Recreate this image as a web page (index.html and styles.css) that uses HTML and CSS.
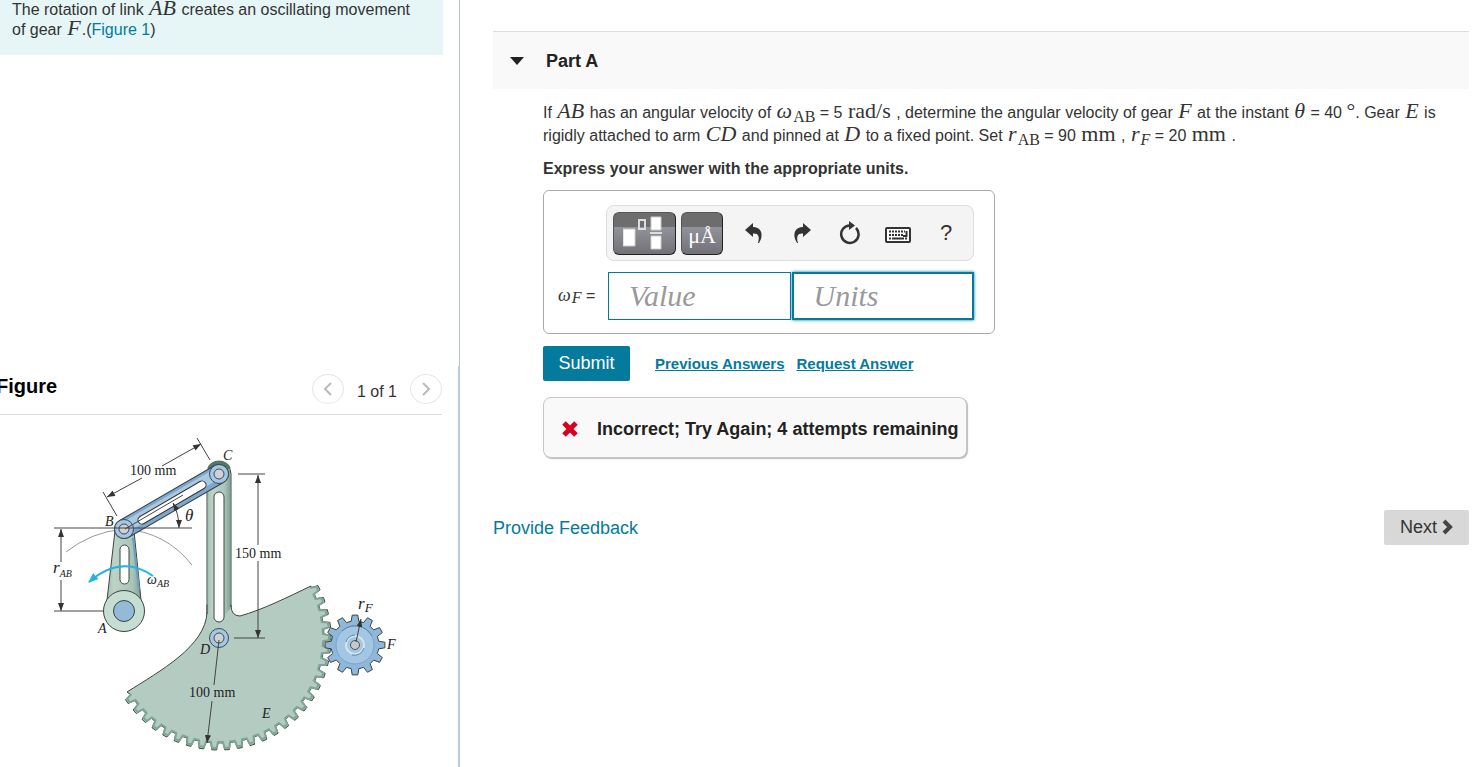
FILE: index.html
```html
<!DOCTYPE html>
<html lang="en">
<head>
    <meta charset="UTF-8">
    <title>Part A</title>
    <link rel="stylesheet" href="styles.css">
</head>
<body>
    <div id="container">
        <div id="side">
            <div class="intro-pane">
                <p class="intro">The rotation of link <i class="math">AB</i> creates an oscillating movement of gear <i class="math">F</i>.(<a href="#figure">Figure 1</a>)</p>
            </div>
            <div class="figure-pane" id="figure">
                <div class="figure-head">
                    <h2>Figure</h2>
                    <div class="pager">
                        <button type="button" aria-label="Previous figure"><svg width="10" height="16" viewBox="0 0 10 16"><path d="M8 2L2 8L8 14"/></svg></button>
                        <span>1 of 1</span>
                        <button type="button" aria-label="Next figure"><svg width="10" height="16" viewBox="0 0 10 16"><path d="M2 2L8 8L2 14"/></svg></button>
                    </div>
                </div>
                <svg class="drawing" viewBox="0 415 442 352" role="img" aria-label="Linkage driving gear F">
                    <defs>
                        <linearGradient id="green-arm" x1="0" x2="1" y1="0" y2="0">
                            <stop offset="0" stop-color="#a3c0b2"/>
                            <stop offset=".2" stop-color="#bdd3c8"/>
                            <stop offset=".75" stop-color="#a9c5b8"/>
                            <stop offset="1" stop-color="#7ba291"/>
                        </linearGradient>
                        <marker id="arrow" viewBox="0 0 8 6" refX="8" refY="3" markerWidth="8" markerHeight="6" markerUnits="userSpaceOnUse" orient="auto-start-reverse">
                            <path d="M0 0L8 3L0 6Z" fill="#333"/>
                        </marker>
                        <marker id="arrow-blue" viewBox="0 0 10 8" refX="9" refY="4" markerWidth="10" markerHeight="8" markerUnits="userSpaceOnUse" orient="auto">
                            <path d="M0 0L10 4L0 8Z" fill="#1eb4e6"/>
                        </marker>
                    </defs>

                    <!-- gear E with arm CD -->
                    <path id="gear-e" class="part" fill="#b3cbc1"/>
                    <path id="rim-e" class="rim"/>
                    <path d="M207.500 612V474A11.500 11.500 0 0 1 230.500 474V608L219 622Z" fill="url(#green-arm)"/>
                    <path class="edge" d="M207 614V474A12 12 0 0 1 231 474V607"/>
                    <path d="M209 469A11 11 0 0 1 229 469" fill="none" stroke="#537867" stroke-width="4"/>
                    <rect class="slot" x="214" y="492" width="10" height="130" rx="5"/>

                    <!-- path of B and link AB -->
                    <path class="thin faint" d="M66 552Q91 532 124 529Q166 532 192 565"/>
                    <path class="part" d="M115 531L107 600A20 20 0 0 0 141 600L134 531Z" fill="url(#green-arm)"/>
                    <path d="M133 538L139 589" stroke="#6e9dc1" stroke-width="2"/>
                    <circle class="part" cx="124" cy="611" r="20.500" fill="#c5ddd3"/>
                    <circle class="part" cx="124" cy="611" r="10.500" fill="#93bad7"/>
                    <rect class="slot" x="120" y="545" width="9" height="39" rx="4.500"/>

                    <!-- link BC -->
                    <path d="M124 529L219 474" stroke="#34424d" stroke-width="20" stroke-linecap="round"/>
                    <path d="M124 529L219 474" stroke="#7fa7ca" stroke-width="18" stroke-linecap="round"/>
                    <path d="M127 526L215 475" stroke="#a9c9e3" stroke-width="11" stroke-linecap="round"/>
                    <path d="M142 520L202 485" stroke="#333" stroke-width="9" stroke-linecap="round"/>
                    <path d="M142 520L202 485" stroke="#fff" stroke-width="7" stroke-linecap="round"/>
                    <g class="pin">
                        <circle cx="124" cy="529" r="9.500"/><circle cx="124" cy="529" r="5"/>
                        <circle cx="219" cy="474" r="9.500"/><circle cx="219" cy="474" r="5"/>
                        <circle cx="219" cy="638" r="9.500"/><circle cx="219" cy="638" r="5"/>
                    </g>

                    <!-- gear F -->
                    <path id="gear-f" class="part" fill="#8fb7d9"/>
                    <circle cx="355" cy="645" r="19" fill="#a3c6e2" stroke="#7ba5c8"/>
                    <circle cx="355" cy="645" r="9" fill="none" stroke="#d5e6f3" stroke-width="2"/>
                    <path d="M346 642A10 10 0 0 1 355 635M364 648A10 10 0 0 1 352 655M342 631A19 19 0 0 1 372 636" fill="none" stroke="#5887af"/>
                    <circle cx="355" cy="645" r="4.500" fill="#c6c8ca" stroke="#4d5459"/>

                    <!-- dimensions -->
                    <g class="thin">
                        <path d="M103 492L117 516M197 438L210 460"/>
                        <path d="M142 478L107 497" marker-end="url(#arrow)"/>
                        <path d="M162 466L201 444" marker-end="url(#arrow)"/>
                        <path d="M54 528H192M54 611H104"/>
                        <path d="M61 562V529" marker-end="url(#arrow)"/>
                        <path d="M61 580V611" marker-end="url(#arrow)"/>
                        <path d="M125 529L183 495"/>
                        <path d="M173 503Q179 514 179 528" marker-start="url(#arrow)" marker-end="url(#arrow)"/>
                        <path d="M238 474H265M234 638H265"/>
                        <path d="M258 545V475" marker-end="url(#arrow)"/>
                        <path d="M258 561V638" marker-end="url(#arrow)"/>
                        <path d="M219 640L214 685M212 701L207 743" marker-end="url(#arrow)"/>
                        <path d="M356 642L361 619" marker-end="url(#arrow)"/>
                    </g>
                    <path d="M153 576Q121 554 89 582" fill="none" stroke="#1eb4e6" stroke-width="2" marker-end="url(#arrow-blue)"/>

                    <g class="labels">
                        <text x="130" y="475">100 mm</text>
                        <text x="235" y="558">150 mm</text>
                        <text x="189" y="697">100 mm</text>
                        <g class="letter">
                            <text x="223" y="460">C</text>
                            <text x="105" y="526">B</text>
                            <text x="98" y="633">A</text>
                            <text x="200" y="654">D</text>
                            <text x="262" y="718">E</text>
                            <text x="387" y="649">F</text>
                            <text class="big" x="185" y="521">θ</text>
                            <text class="big" x="53" y="573">r<tspan class="small" dy="4">AB</tspan></text>
                            <text x="147" y="584">ω<tspan class="small" dy="3">AB</tspan></text>
                            <text class="big" x="358" y="609">r<tspan class="sub-f" dy="3">F</tspan></text>
                        </g>
                    </g>
                </svg>
            </div>
        </div>

        <div id="main">
            <div class="part-head">
                <button type="button" aria-label="Collapse Part A"><svg width="14" height="8" viewBox="0 0 14 8"><path d="M0 0H14L7 8Z" fill="#222"/></svg></button>
                <h1>Part A</h1>
            </div>
            <div class="part-body">
                <p class="prompt">If <i class="math">AB</i> has an angular velocity of <i class="math">ω</i><span class="math sub">AB</span> = 5 <span class="math unit">rad/s</span> , determine the angular velocity of gear <i class="math">F</i> at the instant <i class="math">θ</i> = 40 <span class="math">°</span>. Gear <i class="math">E</i> is rigidly attached to arm <i class="math">CD</i> and pinned at <i class="math">D</i> to a fixed point. Set <i class="math">r</i><span class="math sub">AB</span> = 90 <span class="math unit">mm</span> , <i class="math">r</i><i class="math sub">F</i> = 20 <span class="math unit">mm</span> .</p>
                <p class="express">Express your answer with the appropriate units.</p>
                <form id="answer">
                    <div class="answer-box">
                        <div class="toolbar">
                            <button type="button" class="dark wide" aria-label="Templates">
                                <svg width="44" height="36" viewBox="4 0 44 36">
                                    <path d="M4 14H16V31H4ZM32 2H42V15H32ZM32 21H42V34H32Z" fill="#fff" stroke="#ccc"/>
                                    <path d="M20 5H26V14H20Z" fill="none" stroke="#ddd" stroke-width="2"/>
                                    <path d="M31 18H43" stroke="#ddd" stroke-width="2"/>
                                </svg>
                            </button>
                            <button type="button" class="dark" aria-label="Symbols">μÅ</button>
                            <div class="tools">
                                <button type="button" aria-label="Undo"><svg width="18" height="20" viewBox="0 0 18 20"><path d="M0 7L8 0V4C15 4 18 9 16 16L14 20H13C15 13 13 10 8 10.500V14Z"/></svg></button>
                                <button type="button" aria-label="Redo"><svg width="18" height="20" viewBox="0 0 18 20"><path d="M18 7L10 0V4C3 4 0 9 2 16L4 20H5C3 13 5 10 10 10.500V14Z"/></svg></button>
                                <button type="button" aria-label="Reset"><svg width="22" height="24" viewBox="0 0 22 24"><path d="M11 4.500A8.700 8.700 0 1 0 17 7" fill="none" stroke="#333" stroke-width="2.500"/><path d="M10 0L16 4.500L10 9Z"/></svg></button>
                                <button type="button" aria-label="Keyboard"><svg class="keys" width="26" height="16" viewBox="0 0 26 16"><rect x="1" y="1" width="24" height="14" rx="1" fill="#fff" stroke="#333" stroke-width="2"/><path d="M4 4.500H20M4 8H18" stroke="#333" stroke-width="2" stroke-dasharray="2 1"/><path d="M4 11.500H6M7 11.500H19M20 11.500H22M21.500 4V9H18" fill="none" stroke="#333" stroke-width="2"/></svg></button>
                                <button type="button" class="help" aria-label="Help">?</button>
                            </div>
                        </div>
                        <label for="value"><i class="math">ω</i><i class="math sub">F</i> =</label>
                        <div class="fields">
                            <input type="text" id="value" placeholder="Value">
                            <input type="text" id="units" class="selected" placeholder="Units" aria-label="Units">
                        </div>
                    </div>
                    <div class="actions">
                        <button type="submit">Submit</button>
                        <a href="#previous">Previous Answers</a>
                        <a href="#request">Request Answer</a>
                    </div>
                </form>
                <div class="result">
                    <svg width="18" height="18" viewBox="0 0 18 18"><path d="M3 3L15 15M15 3L3 15" stroke="#d9001f" stroke-width="5"/></svg>
                    <span>Incorrect; Try Again; 4 attempts remaining</span>
                </div>
            </div>
            <div class="bottom">
                <a href="#feedback">Provide Feedback</a>
                <button type="button">Next <svg width="11" height="16" viewBox="0 0 11 16"><path d="M2 2L8 8L2 14" fill="none" stroke="#444" stroke-width="4"/></svg></button>
            </div>
        </div>
    </div>
    <script>
        // points of a toothed edge, angles in degrees
        function teeth(cx, cy, root, tip, from, step, count) {
            var steps = [[0.2, root], [0.32, tip], [0.68, tip], [0.8, root]];
            var out = [];
            for (var i = 0; i < count; i++) {
                for (var j = 0; j < steps.length; j++) {
                    var a = (from + (i + steps[j][0]) * step) * Math.PI / 180;
                    out.push((cx + steps[j][1] * Math.cos(a)).toFixed(1) + " " + (cy + steps[j][1] * Math.sin(a)).toFixed(1));
                }
            }
            return out.join("L");
        }
        var edge = teeth(219, 638, 105, 112, -30, 6.62, 27);
        document.getElementById("gear-e").setAttribute("d",
            "M207 612C206 646 160 671 127 692L" + edge.split("L").reverse().join("L") +
            "L311 586C288 597 262 610 240 616Q231 616 231 605L207 605Z");
        document.getElementById("rim-e").setAttribute("d", "M" + teeth(219, 638, 104, 110, -30, 6.62, 27));
        document.getElementById("gear-f").setAttribute("d", "M" + teeth(355, 645, 24, 30, -105, 30, 12) + "Z");
    </script>
</body>
</html>
```
FILE: styles.css
```css
*{
    margin: 0;
    padding: 0;
    box-sizing: border-box;
}
body{
    font: 16px/20px "Liberation Sans", Arial, sans-serif;
    color: #333;
    background: #fff;
    overflow: hidden;
}
a{
    color: #047a9c;
    text-decoration: none;
}
button{
    font: inherit;
    color: inherit;
    border: 0;
    background: none;
    cursor: pointer;
}
.math{
    font-family: "Liberation Serif", "Times New Roman", serif;
    font-size: 22px;
    line-height: 16px;
}
i.math{
    margin: 0 1px;
}
.math.unit{
    margin: 0 1px;
}
.math.sub{
    font-size: 16px;
    line-height: 0;
    vertical-align: -4px;
    margin: 0;
}
#container{
    display: grid;
    grid-template-columns: minmax(0, 460px) minmax(0, 1fr);
    min-height: 100vh;
}
#side{
    display: flex;
    flex-direction: column;
}
.intro-pane{
    height: 366px;
    padding-right: 16px;
    border-right: 1px solid #b9c4d6;
}
.intro{
    padding: 0 20px 15px 12px;
    background: #e6f6f7;
}
.figure-pane{
    flex: 1;
    padding-right: 16px;
    border-right: 2px solid #b7cade;
}
.figure-head{
    display: flex;
    justify-content: space-between;
    height: 49px;
    padding-top: 8px;
    border-bottom: 1px solid #ddd;
}
.figure-head h2{
    font-size: 20px;
    line-height: 24px;
    color: #000;
    margin-left: -4px;
}
.pager{
    display: flex;
    gap: 13px;
}
.pager span{
    line-height: 35px;
}
.pager button{
    width: 32px;
    height: 30px;
    border: 1px solid #e5e5e5;
    border-radius: 50%;
}
.pager svg{
    display: block;
    margin: auto;
    fill: none;
    stroke: #bbb;
    stroke-width: 2;
}
.drawing{
    display: block;
    width: 100%;
}
.part{
    stroke: #3b4642;
    stroke-width: 1;
}
.edge{
    fill: none;
    stroke: #3b4642;
}
.rim{
    fill: none;
    stroke: #7ea595;
    stroke-width: 2;
}
.slot{
    fill: #fff;
    stroke: #3b4642;
}
.pin circle{
    fill: #a6c7e1;
    stroke: #3b4a58;
}
.pin circle:nth-child(even){
    fill: #cfd2d4;
}
.thin{
    fill: none;
    stroke: #444;
    stroke-width: 1;
}
.faint{
    stroke: #999;
}
.labels{
    font: 14px "Liberation Serif", "Times New Roman", serif;
    fill: #222;
}
.letter{
    font-style: italic;
}
.big{
    font-size: 17px;
}
.small{
    font-size: 10px;
}
.sub-f{
    font-size: 13px;
}
#main{
    padding: 31px 8px 0 33px;
}
.part-head{
    display: flex;
    align-items: center;
    height: 58px;
    padding-left: 17px;
    border-top: 1px solid #ddd;
    background: #f9f9f9;
}
.part-head button{
    width: 14px;
    height: 20px;
    margin-right: 22px;
}
.part-head svg{
    display: block;
}
.part-head h1{
    font-size: 18px;
    color: #222;
}
.part-body{
    padding: 12px 0 0 50px;
}
.prompt{
    line-height: 23px;
    padding-right: 20px;
}
.express{
    font-weight: bold;
    margin: 12px 0 11px;
}
.answer-box{
    display: grid;
    grid-template-columns: 49px 368px;
    align-items: center;
    gap: 11px 0;
    width: max-content;
    padding: 14px 20px 13px 13px;
    border: 1px solid #aaa;
    border-radius: 6px;
}
.toolbar{
    grid-column: 2;
    display: flex;
    align-items: center;
    gap: 5px;
    height: 56px;
    padding: 0 6px;
    border: 1px solid #ddd;
    border-radius: 8px;
    background: #f4f4f4;
}
.dark{
    width: 42px;
    height: 43px;
    padding-top: 6px;
    border: 1px solid #555;
    border-right-color: #222;
    border-bottom-color: #222;
    border-radius: 6px;
    background: linear-gradient(#6d6d6d 34%, #92929a 35%, #717176);
    color: #fff;
    font: 22px "Liberation Serif", "Times New Roman", serif;
}
.dark.wide{
    width: 63px;
    padding-top: 0;
}
.dark svg{
    display: block;
    margin: auto;
}
.tools{
    flex: 1;
    display: flex;
    justify-content: space-between;
    padding: 0 4px 0 9px;
}
.tools button{
    display: flex;
    align-items: center;
    justify-content: center;
    width: 34px;
    height: 32px;
    fill: #333;
}
.tools .keys{
    margin-top: 4px;
}
.tools .help{
    font-size: 22px;
}
.fields{
    display: grid;
    grid-template-columns: 1fr 1fr;
    gap: 1px;
    padding-left: 2px;
}
.fields input{
    width: 100%;
    height: 48px;
    padding: 0 20px;
    border: 1px solid #047a9c;
    font: italic 30px "Liberation Serif", "Times New Roman", serif;
}
.fields .selected{
    border-width: 2px;
    box-shadow: 0 0 3px #047a9c;
}
.fields input::placeholder{
    color: #999;
}
label .math{
    font-size: 18px;
}
label .math.sub{
    vertical-align: -2px;
}
.actions{
    display: flex;
    align-items: center;
    gap: 12px;
    margin: 12px 0 16px;
}
.actions button{
    width: 87px;
    height: 35px;
    padding-bottom: 2px;
    margin-right: 13px;
    border-radius: 2px;
    background: #047a9c;
    color: #fff;
    font-size: 18px;
}
.actions a{
    font-size: 15px;
    font-weight: bold;
    text-decoration: underline;
}
.result{
    display: flex;
    align-items: center;
    gap: 18px;
    width: max-content;
    height: 61px;
    padding: 2px 8px 0 17px;
    border: 1px solid #c7c7c7;
    border-radius: 8px;
    background: #f9f9f9;
    box-shadow: 1px 1px 1px #bbb;
    color: #222;
    font-size: 18px;
    font-weight: bold;
}
.bottom{
    display: flex;
    align-items: center;
    justify-content: space-between;
    margin-top: 52px;
    font-size: 18px;
}
.bottom button{
    display: flex;
    align-items: center;
    justify-content: center;
    gap: 5px;
    width: 85px;
    height: 35px;
    padding-bottom: 2px;
    border-radius: 2px;
    background: #d8d8d8;
}
```
